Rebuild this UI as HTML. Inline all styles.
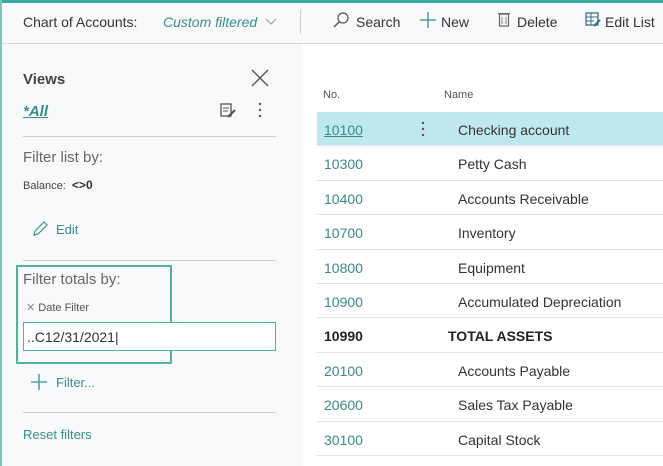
<!DOCTYPE html><html><head><style>
*{margin:0;padding:0;box-sizing:border-box}
body{width:663px;height:466px;overflow:hidden;background:#fff;font-family:"Liberation Sans",sans-serif;position:relative;color:#333}
.a{position:absolute;white-space:nowrap}
.top{left:0;top:0;width:663px;height:3px;background:#3aa99e}
.ls{left:0;top:0;width:2px;height:466px;background:#7cc5bd}
.lp{left:2px;top:44px;width:300px;height:422px;background:#f8f9fa}
.hdr{left:2px;top:3px;width:661px;height:41px;background:#f8f9fa;border-bottom:1px solid #d8d8d8}
.t{color:#3a8f8a}
.row{position:absolute;left:317px;width:346px;height:34.4px;border-bottom:1px solid #e3e3e3;font-size:14px}
.row .n{position:absolute;left:7px;top:10px;color:#3a8a85}
.row .m{position:absolute;left:141px;top:10px;color:#333}
</style></head><body>
<div class="a lp"></div>
<div class="a hdr"></div>
<div class="a top"></div>
<div class="a ls"></div>
<div class="a" style="left:23px;top:14px;font-size:14px;color:#333">Chart of Accounts:</div>
<div class="a t" style="left:163px;top:14px;font-size:14px;font-style:italic">Custom filtered</div>
<svg class="a" style="left:265px;top:18px" width="12" height="8"><path d="M1 1 L6 6 L11 1" fill="none" stroke="#999" stroke-width="1"/></svg>
<div class="a" style="left:300px;top:10px;width:1px;height:24px;background:#ccc"></div>
<svg class="a" style="left:333px;top:12px" width="16" height="16"><circle cx="10" cy="6" r="5" fill="none" stroke="#555" stroke-width="1.2"/><line x1="6.5" y1="9.5" x2="1" y2="15" stroke="#555" stroke-width="1.4"/></svg>
<div class="a" style="left:356px;top:14px;font-size:14px">Search</div>
<svg class="a" style="left:420px;top:12px" width="16" height="16"><path d="M8 0 V16 M0 8 H16" stroke="#3a8f8a" stroke-width="1.3"/></svg>
<div class="a" style="left:441px;top:14px;font-size:14px">New</div>
<svg class="a" style="left:498px;top:11px" width="12" height="17"><rect x="1.5" y="3" width="9" height="12" fill="none" stroke="#666" stroke-width="1.2"/><line x1="0" y1="2.5" x2="12" y2="2.5" stroke="#666"/><line x1="4" y1="6" x2="4" y2="13" stroke="#888"/><line x1="8" y1="6" x2="8" y2="13" stroke="#888"/></svg>
<div class="a" style="left:517px;top:14px;font-size:14px">Delete</div>
<svg class="a" style="left:585px;top:12px" width="16" height="15"><rect x="1" y="1" width="12" height="12" fill="none" stroke="#3a6f8a" stroke-width="1.3"/><line x1="1" y1="5" x2="13" y2="5" stroke="#3a6f8a"/><line x1="1" y1="9" x2="9" y2="9" stroke="#3a6f8a"/><line x1="6" y1="1" x2="6" y2="13" stroke="#3a6f8a"/><path d="M9 14 L15 8" stroke="#3a6f8a" stroke-width="2"/></svg>
<div class="a" style="left:605px;top:14px;font-size:14px">Edit List</div>

<div class="a" style="left:23px;top:71px;font-size:15px;font-weight:bold;color:#444">Views</div>
<svg class="a" style="left:251px;top:69px" width="18" height="18"><path d="M1 1 L17 17 M17 1 L1 17" stroke="#555" stroke-width="1.4"/></svg>
<div class="a t" style="left:23px;top:103px;font-size:15px;font-weight:bold;font-style:italic;text-decoration:underline">*All</div>
<svg class="a" style="left:220px;top:103px" width="16" height="16"><rect x="1" y="1" width="10" height="12" fill="none" stroke="#555" stroke-width="1.3"/><line x1="3" y1="5" x2="9" y2="5" stroke="#555"/><line x1="3" y1="8" x2="8" y2="8" stroke="#555"/><path d="M8 14 L15 7" stroke="#555" stroke-width="2.2"/></svg>
<svg class="a" style="left:257px;top:102px" width="6" height="16"><circle cx="3" cy="2" r="1.2" fill="#555"/><circle cx="3" cy="8" r="1.2" fill="#555"/><circle cx="3" cy="14" r="1.2" fill="#555"/></svg>
<div class="a" style="left:23px;top:136px;width:253px;height:1px;background:#ccc"></div>
<div class="a" style="left:23px;top:149px;font-size:15px;color:#666">Filter list by:</div>
<div class="a" style="left:23px;top:178px;font-size:11px;color:#444">Balance: &nbsp;<b style="font-size:12px;color:#333">&lt;&gt;0</b></div>
<svg class="a" style="left:32px;top:221px" width="16" height="16"><path d="M2 14 L3 10 L12 1 L15 4 L6 13 Z" fill="none" stroke="#3a8f8a" stroke-width="1.2"/></svg>
<div class="a t" style="left:56px;top:222px;font-size:13px">Edit</div>
<div class="a" style="left:23px;top:260px;width:253px;height:1px;background:#ccc"></div>
<div class="a" style="left:16px;top:265px;width:156px;height:99px;border:2px solid #4fb59a"></div>
<div class="a" style="left:23px;top:271px;font-size:15px;color:#666">Filter totals by:</div>
<div class="a" style="left:26px;top:301px;font-size:11px;color:#555"><span style="color:#888">&#x2715;</span> Date Filter</div>
<div class="a" style="left:23px;top:322px;width:253px;height:29px;border:1.5px solid #4fb59a;background:#fff"></div>
<div class="a" style="left:27px;top:329px;font-size:14px;color:#333">..C12/31/2021<span style="font-weight:300">|</span></div>
<svg class="a" style="left:31px;top:374px" width="16" height="16"><path d="M8 0 V16 M0 8 H16" stroke="#3a8f8a" stroke-width="1.3"/></svg>
<div class="a t" style="left:56px;top:375px;font-size:13px">Filter...</div>
<div class="a" style="left:23px;top:412px;width:253px;height:1px;background:#ccc"></div>
<div class="a t" style="left:23px;top:427px;font-size:13px">Reset filters</div>

<div class="a" style="left:323px;top:89px;font-size:11px;color:#555">No.</div>
<div class="a" style="left:444px;top:89px;font-size:11px;color:#555">Name</div>

<div class="row" style="top:112px;background:#bfe8ec"><span class="n" style="text-decoration:underline">10100</span><svg style="position:absolute;left:103px;top:9px" width="6" height="16"><circle cx="3" cy="2" r="1.2" fill="#555"/><circle cx="3" cy="8" r="1.2" fill="#555"/><circle cx="3" cy="14" r="1.2" fill="#555"/></svg><span class="m">Checking account</span></div>
<div class="row" style="top:146.4px"><span class="n">10300</span><span class="m">Petty Cash</span></div>
<div class="row" style="top:180.8px"><span class="n">10400</span><span class="m">Accounts Receivable</span></div>
<div class="row" style="top:215.2px"><span class="n">10700</span><span class="m">Inventory</span></div>
<div class="row" style="top:249.6px"><span class="n">10800</span><span class="m">Equipment</span></div>
<div class="row" style="top:284px"><span class="n">10900</span><span class="m">Accumulated Depreciation</span></div>
<div class="row" style="top:318.4px;font-weight:bold"><span class="n" style="color:#222">10990</span><span class="m" style="left:131px;color:#222">TOTAL ASSETS</span></div>
<div class="row" style="top:352.8px"><span class="n">20100</span><span class="m">Accounts Payable</span></div>
<div class="row" style="top:387.2px"><span class="n">20600</span><span class="m">Sales Tax Payable</span></div>
<div class="row" style="top:421.6px"><span class="n">30100</span><span class="m">Capital Stock</span></div>
</body></html>
